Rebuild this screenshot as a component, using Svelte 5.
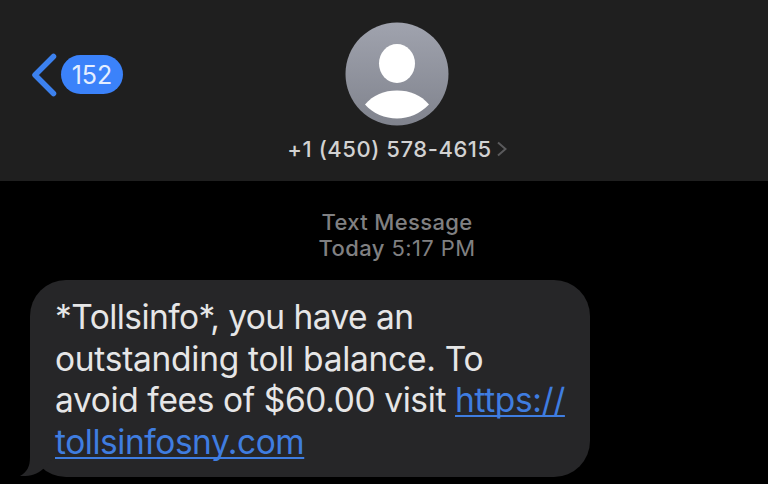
<script lang="ts">
  const unread = 152;
  const sender = '+1 (450) 578-4615';
  const lines = [
    { text: '*Tollsinfo*, you have an', spacing: -0.56 },
    { text: 'outstanding toll balance. To', spacing: -0.27 },
    { text: 'avoid fees of $60.00 visit ', link: 'https://', spacing: -0.38 },
    { link: 'tollsinfosny.com', spacing: -0.46 },
  ];
</script>

<div class="screen">
  <header>
    <button class="back" aria-label="Back">
      <svg width="27" height="44" viewBox="0 0 27 44">
        <path d="M23.500 3.500 5 22l18.500 18.500" />
      </svg>
      <span class="badge">{unread}</span>
    </button>

    <div class="contact">
      <svg class="avatar" width="104" height="104" viewBox="0 0 104 104">
        <defs>
          <linearGradient id="avatar-bg" x1="0" y1="0" x2="0" y2="1">
            <stop offset="0" stop-color="#a0a3ae" />
            <stop offset="1" stop-color="#80838d" />
          </linearGradient>
        </defs>
        <circle cx="52" cy="52" r="51.5" fill="url(#avatar-bg)" />
        <ellipse cx="52" cy="41.5" rx="18" ry="19.5" />
        <path d="M20 82.5C28 73 39 68.500 52 68.500s24 4.500 32 14C75 91.500 64 96.500 52 96.500s-24-5-32-14Z" />
      </svg>
      <div class="sender">
        <span>{sender}</span>
        <svg width="10" height="16" viewBox="0 0 10 16">
          <path d="M1 1.500 8.500 8 1 14.500" />
        </svg>
      </div>
    </div>
  </header>

  <main>
    <div class="stamp">
      <div class="kind">Text Message</div>
      <div class="time"><b>Today</b> 5:17 PM</div>
    </div>

    <div class="bubble">
      {#each lines as line}
        <div style:letter-spacing="{line.spacing}px">{line.text ?? ''}{#if line.link}<span class="link">{line.link}</span>{/if}</div>
      {/each}
      <svg class="tail" width="40" height="40" viewBox="0 0 40 40">
        <path d="M10 0v20c0 10-3 15-10 19 9 .5 17-1.500 23-7L34 20V0Z" />
      </svg>
    </div>
  </main>
</div>

<style>
  :global(body) {
    background: #000;
  }

  .screen {
    width: 768px;
    height: 484px;
    overflow: hidden;
    background: #000;
    color: #e6e6e7;
    font-family: Inter, 'Liberation Sans', sans-serif;
  }

  header {
    box-sizing: border-box;
    display: grid;
    grid-template-columns: 260px 274px 1fr;
    height: 181px;
    background: #1f1f1f;
  }

  .back {
    display: flex;
    align-items: center;
    align-self: start;
    gap: 4px;
    margin: 53px 0 0 30px;
    padding: 0;
    border: 0;
    background: none;
    font: inherit;
  }

  .back path {
    fill: none;
    stroke: #3c81ee;
    stroke-width: 5.5;
    stroke-linecap: round;
    stroke-linejoin: round;
  }

  .badge {
    width: 62px;
    height: 39px;
    margin-bottom: 1px;
    border-radius: 20px;
    background: #3b82fa;
    color: #e4eeff;
    font-size: 25px;
    line-height: 40px;
    text-align: center;
  }

  .contact {
    display: flex;
    flex-direction: column;
    align-items: center;
    padding-top: 22px;
  }

  .avatar {
    fill: #fff;
  }

  .sender {
    display: flex;
    align-items: center;
    gap: 5px;
    margin-top: 10px;
    font-size: 22px;
    font-weight: 500;
    line-height: 26px;
    letter-spacing: 0.56px;
    white-space: nowrap;
    color: #d2d2d2;
  }

  .sender path {
    fill: none;
    stroke: #5a5a5c;
    stroke-width: 2;
  }

  main {
    padding: 28px 0 0 30px;
  }

  .stamp {
    width: 734px;
    font-size: 22px;
    line-height: 26px;
    text-align: center;
    color: #808082;
  }

  .kind {
    font-weight: 500;
    letter-spacing: 0.35px;
  }

  .time {
    letter-spacing: 0.4px;
  }

  .time b {
    font-weight: 500;
  }

  .bubble {
    position: relative;
    box-sizing: border-box;
    width: 560px;
    height: 197px;
    margin-top: 19px;
    padding: 17px 0 0 25px;
    border-radius: 36px;
    background: #262628;
    font-size: 33.5px;
    line-height: 41.700px;
    white-space: pre;
  }

  .link {
    color: #3f7de0;
    text-decoration: underline;
    text-decoration-thickness: 2px;
    text-underline-offset: 3px;
    text-decoration-skip-ink: none;
  }

  .tail {
    position: absolute;
    left: -10px;
    bottom: 0;
    fill: #262628;
  }
</style>
